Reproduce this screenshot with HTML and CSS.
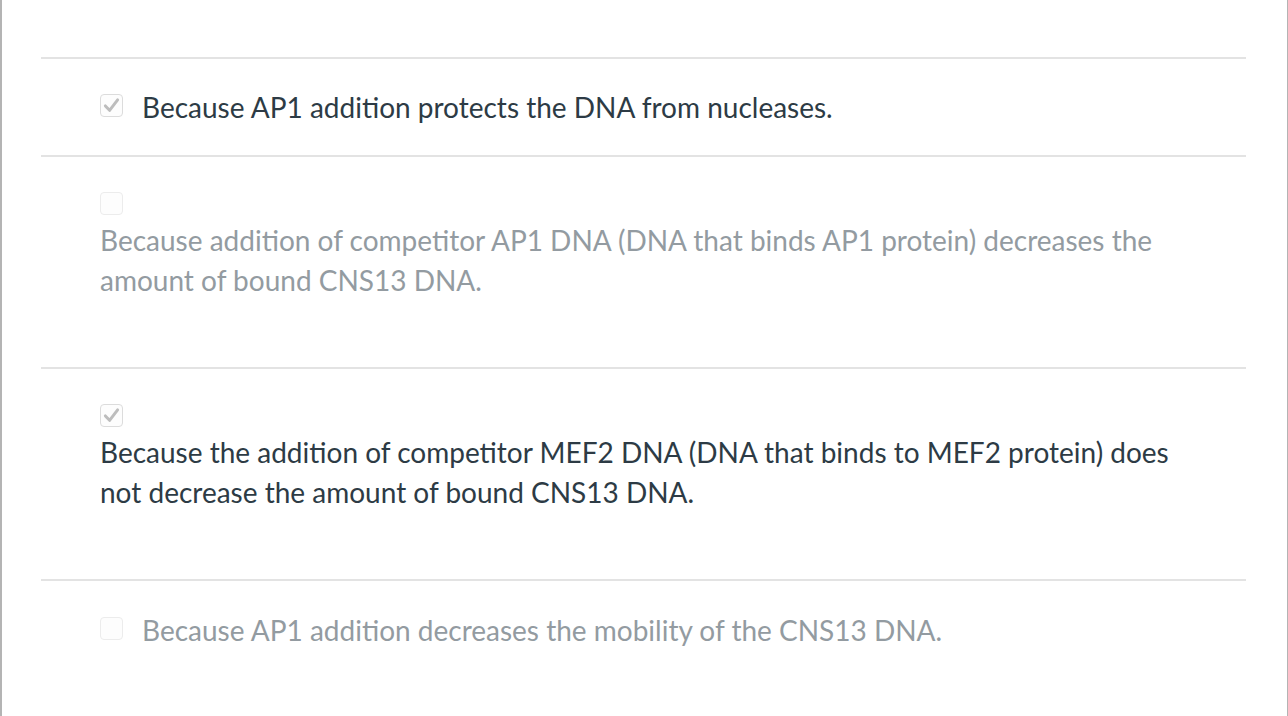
FILE: index.html
```html
<!DOCTYPE html>
<html lang="en">
<head>
<meta charset="UTF-8">
<meta name="viewport" content="width=device-width, initial-scale=1.0">
<title>Answers</title>
<link rel="stylesheet" href="styles.css">
</head>
<body>

<div class="page">
    <div class="answers">
        <div class="answer inline selected">
            <span class="check checked">
                <svg viewBox="0 0 24 24" width="21" height="21"><path d="M5 12.5 L9.8 17.5 L19 5.5" fill="none" stroke="#bdbdbd" stroke-width="3.4" stroke-linecap="round" stroke-linejoin="round"/></svg>
            </span>
            <span class="text">Because AP1 addition protects the DNA from nucleases.</span>
        </div>

        <div class="answer stacked">
            <span class="check"></span>
            <div class="text">Because addition of competitor AP1 DNA (DNA that binds AP1 protein) decreases the amount of bound CNS13 DNA.</div>
        </div>

        <div class="answer stacked selected">
            <span class="check checked">
                <svg viewBox="0 0 24 24" width="21" height="21"><path d="M5 12.5 L9.8 17.5 L19 5.5" fill="none" stroke="#bdbdbd" stroke-width="3.4" stroke-linecap="round" stroke-linejoin="round"/></svg>
            </span>
            <div class="text">Because the addition of competitor MEF2 DNA (DNA that binds to MEF2 protein) does not decrease the amount of bound CNS13 DNA.</div>
        </div>

        <div class="answer inline last">
            <span class="check"></span>
            <span class="text">Because AP1 addition decreases the mobility of the CNS13 DNA.</span>
        </div>
    </div>
</div>

</body>
</html>
```

FILE: styles.css
```css
/* Page */
html, body {
    margin: 0;
    padding: 0;
    background: #fff;
}

body {
    font-family: Lato, "Open Sans", sans-serif;
    font-size: 28px;
    line-height: 40px;
    color: #939ba1;
}

.page {
    height: 716px;
    box-sizing: border-box;
    border-left: 2px solid #b4b4b4;
    border-right: 1px solid #b4b4b4;
    width: 1288px;
    padding-top: 57px;
}

.answers {
    margin: 0 41px 0 39px;
}

/* Answer rows */
.answer {
    border-top: 2px solid #e3e3e3;
    padding: 0 59px 0 59px;
}

.answer.selected {
    color: #2d3b45;
}

.answer.inline {
    display: flex;
    align-items: flex-start;
    gap: 19px;
    padding-top: 28px;
    padding-bottom: 28px;
}

.answer.inline .check {
    margin-top: 7px;
}

.answer.inline.last {
    padding-top: 29px;
}

.answer.stacked {
    padding-top: 35px;
    padding-bottom: 67px;
}

.answer.stacked .check {
    margin-bottom: 5px;
}

/* Checkbox */
.check {
    display: flex;
    align-items: center;
    justify-content: center;
    flex: none;
    width: 23px;
    height: 23px;
    box-sizing: border-box;
    border: 1px solid #ececec;
    border-radius: 4px;
    background: #fdfdfd;
}

.check.checked {
    border-color: #dcdcdc;
}
```
